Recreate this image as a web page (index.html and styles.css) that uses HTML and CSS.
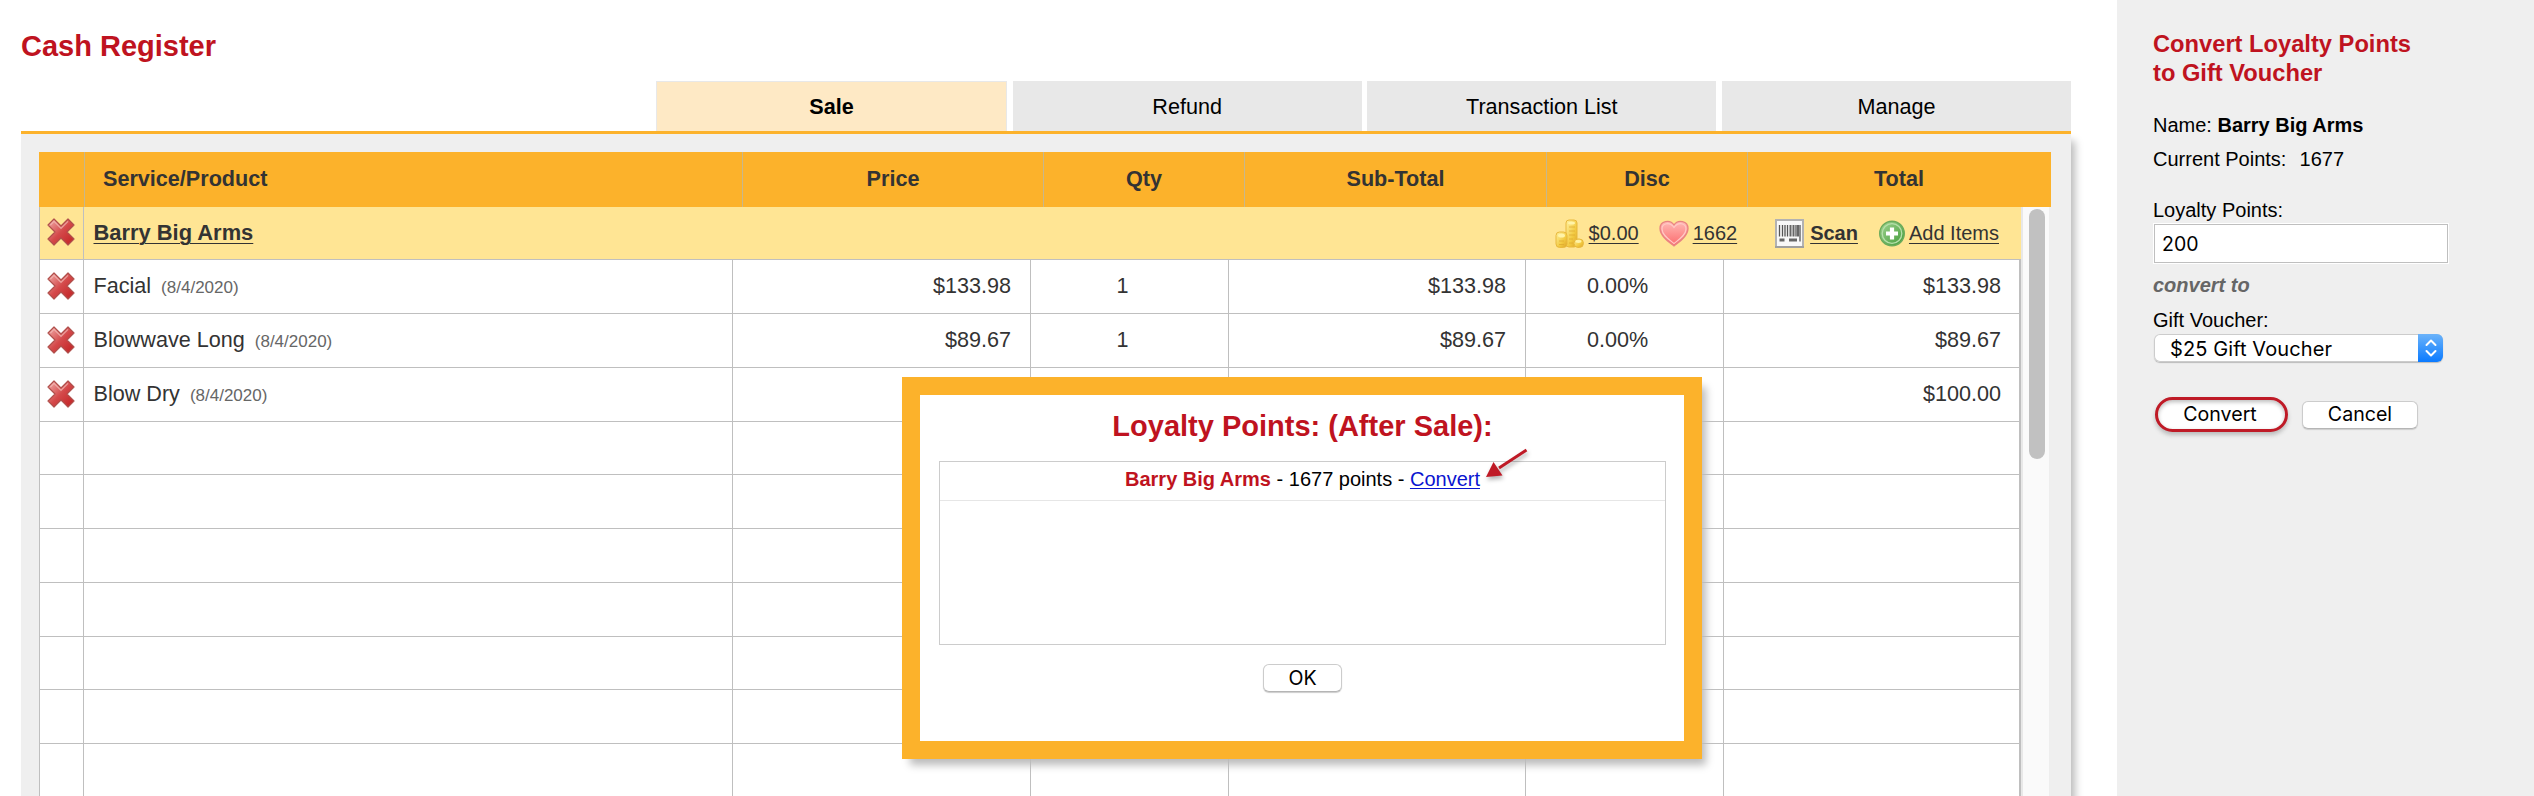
FILE: index.html
```html
<!DOCTYPE html>
<html lang="en">
<head>
  <meta charset="UTF-8" />
  <meta name="viewport" content="width=device-width, initial-scale=1" />
  <title>Cash Register</title>
  <link rel="stylesheet" href="styles.css">
</head>
<body>

<!-- Shared icons -->
<svg class="icon-defs" width="0" height="0">
  <defs>
    <linearGradient id="red" x1="0" y1="0" x2="1" y2="1">
      <stop offset="0" stop-color="#f2b0ad" />
      <stop offset="0.5" stop-color="#d4494a" />
      <stop offset="1" stop-color="#c11f22" />
    </linearGradient>
    <linearGradient id="gold" x1="0" y1="0" x2="1" y2="1">
      <stop offset="0" stop-color="#fff0a0" />
      <stop offset="0.6" stop-color="#f3cb42" />
      <stop offset="1" stop-color="#dda52a" />
    </linearGradient>
    <linearGradient id="pink" x1="0" y1="0" x2="0" y2="1">
      <stop offset="0" stop-color="#ffb9b5" />
      <stop offset="1" stop-color="#fb6a6c" />
    </linearGradient>
    <linearGradient id="green" x1="0" y1="0" x2="1" y2="1">
      <stop offset="0" stop-color="#a5d694" />
      <stop offset="1" stop-color="#3f9a37" />
    </linearGradient>
    <symbol id="delete" viewBox="0 0 28 28">
      <path d="M7 1 L14 8 L21 1 L27 7 L20 14 L27 21 L21 27 L14 20 L7 27 L1 21 L8 14 L1 7 Z" fill="url(#red)" stroke="#b0504c" stroke-width="1.2" stroke-linejoin="round" />
      <path d="M3.4 7 L7 3.4 L14 10.3 L21 3.4" fill="none" stroke="#f3bdb9" stroke-width="1.2" opacity="0.7" />
    </symbol>
  </defs>
</svg>

<div class="page">
  <main>
    <h1>Cash Register</h1>

    <nav class="tabs">
      <a class="tab active">Sale</a>
      <a class="tab">Refund</a>
      <a class="tab">Transaction List</a>
      <a class="tab">Manage</a>
    </nav>

    <div class="panel">
      <div class="header-row">
        <div></div>
        <div class="product">Service/Product</div>
        <div>Price</div>
        <div>Qty</div>
        <div>Sub-Total</div>
        <div>Disc</div>
        <div>Total</div>
      </div>

      <div class="scroll-area">
        <div class="rows">
          <div class="client-row">
            <div class="del"><svg><use href="#delete" /></svg></div>
            <a class="client">Barry Big Arms</a>
            <div class="actions">
              <svg class="coins" viewBox="0 0 29 29">
                <g fill="url(#gold)" stroke="#e8b83c" stroke-width="1">
                  <rect x="11" y="1" width="11" height="27" rx="3" />
                  <rect x="1" y="13" width="11" height="15.4" rx="3.5" />
                  <rect x="19" y="20" width="9.4" height="8.4" rx="4" />
                </g>
                <path d="M14 8h6M14 12h6M14 16h6M14 20h4M14 24h4M4 22h5M4 25.500h5" fill="none" stroke="#dda82e" stroke-width="1" opacity="0.7" />
                <g fill="#fff3a8">
                  <ellipse cx="16.500" cy="4" rx="3.500" ry="1.600" />
                  <ellipse cx="6.500" cy="16.500" rx="3.500" ry="2" />
                  <ellipse cx="23.500" cy="22.500" rx="3" ry="1.400" />
                </g>
              </svg>
              <a class="credit">$0.00</a>
              <svg class="heart" viewBox="0 0 30 27">
                <path d="M15 26 C10 22 1 16 1 8.500 C1 1 11 -1 15 5 C19 -1 29 1 29 8.500 C29 16 20 22 15 26 Z" fill="url(#pink)" stroke="#e98482" stroke-width="1.300" />
                <path d="M15 23.500 C10 19.500 3 15 3 9 C3 3 11 1.500 15 7.500 C19 1.500 27 3 27 9 C27 15 20 19.500 15 23.500 Z" fill="none" stroke="#ffc9c6" stroke-width="1.200" />
              </svg>
              <a class="points">1662</a>
              <svg class="barcode" viewBox="0 0 29 29">
                <rect x="1" y="1" width="27" height="27" fill="#f8f8f8" stroke="#b2b2b2" stroke-width="2" />
                <path d="M4.500 6v11.500M7.500 6v11.500M10 6v11.500M12.500 6v11.500M21 6v11.500M25 6v16.500" stroke="#555" stroke-width="1.300" />
                <path d="M15.500 6v11.500M18.500 6v11.500M23 6v11.500" stroke="#666" stroke-width="2" />
                <path d="M4.500 21h5M14 21h8" stroke="#666" stroke-width="3" />
                <path d="M0 28h29" stroke="#999" stroke-width="1.500" />
              </svg>
              <a class="scan">Scan</a>
              <svg class="add" viewBox="0 0 26 27">
                <circle cx="13" cy="13.500" r="12.300" fill="url(#green)" stroke="#6cab5c" stroke-width="1.400" />
                <circle cx="13" cy="13.500" r="9.800" fill="none" stroke="#b7dfab" stroke-width="1.300" />
                <path d="M13 7.500v12M7 13.500h12" stroke="#fff" stroke-width="4.200" />
              </svg>
              <a class="add-items">Add Items</a>
            </div>
          </div>

          <div class="row">
            <div class="del"><svg><use href="#delete" /></svg></div>
            <div class="name">Facial <small>(8/4/2020)</small></div>
            <div class="money">$133.98</div>
            <div class="mid">1</div>
            <div class="money">$133.98</div>
            <div class="mid">0.00%</div>
            <div class="total">$133.98</div>
          </div>
          <div class="row">
            <div class="del"><svg><use href="#delete" /></svg></div>
            <div class="name">Blowwave Long <small>(8/4/2020)</small></div>
            <div class="money">$89.67</div>
            <div class="mid">1</div>
            <div class="money">$89.67</div>
            <div class="mid">0.00%</div>
            <div class="total">$89.67</div>
          </div>
          <div class="row">
            <div class="del"><svg><use href="#delete" /></svg></div>
            <div class="name">Blow Dry <small>(8/4/2020)</small></div>
            <div></div><div></div><div></div><div></div>
            <div class="total">$100.00</div>
          </div>

          <!-- Empty rows -->
          <div class="row short"><div></div><div></div><div></div><div></div><div></div><div></div><div></div></div>
          <div class="row"><div></div><div></div><div></div><div></div><div></div><div></div><div></div></div>
          <div class="row"><div></div><div></div><div></div><div></div><div></div><div></div><div></div></div>
          <div class="row"><div></div><div></div><div></div><div></div><div></div><div></div><div></div></div>
          <div class="row short"><div></div><div></div><div></div><div></div><div></div><div></div><div></div></div>
          <div class="row"><div></div><div></div><div></div><div></div><div></div><div></div><div></div></div>
          <div class="row"><div></div><div></div><div></div><div></div><div></div><div></div><div></div></div>
        </div>
        <div class="scrollbar"><div class="thumb"></div></div>
      </div>
    </div>
  </main>

  <aside>
    <h2>Convert Loyalty Points<br>to Gift Voucher</h2>
    <p>Name: <b>Barry Big Arms</b></p>
    <p>Current Points: &nbsp;<span class="current">1677</span></p>

    <label class="points-label">Loyalty Points:</label>
    <div class="input">200</div>
    <div class="convert-to">convert to</div>
    <label>Gift Voucher:</label>
    <div class="select">
      <span>$25 Gift Voucher</span>
      <div class="arrows">
        <svg width="12" height="18" viewBox="0 0 12 18">
          <path d="M1.500 6 L6 1.500 L10.500 6 M1.500 12 L6 16.500 L10.500 12" fill="none" stroke="#fff" stroke-width="2" stroke-linecap="round" stroke-linejoin="round" />
        </svg>
      </div>
    </div>
    <div class="buttons">
      <button class="convert">Convert</button>
      <button class="cancel">Cancel</button>
    </div>
  </aside>
</div>

<!-- Loyalty popup -->
<div class="popup">
  <h1>Loyalty Points: (After Sale):</h1>
  <div class="list">
    <div class="item"><b>Barry Big Arms</b> - 1677 points - <a>Convert</a></div>
  </div>
  <button>OK</button>
  <svg class="pointer" width="50" height="38" viewBox="0 0 50 38">
    <path d="M44.500 5 L17 23" stroke="#bf1a26" stroke-width="3" />
    <path d="M4 32 L11.500 17 L20.500 30.500 Z" fill="#bf1a26" />
  </svg>
</div>

</body>
</html>
```
FILE: styles.css
```css
* {
  box-sizing: border-box;
}

html, body {
  height: 100%;
  margin: 0;
  padding: 0;
  overflow: hidden;
}

body {
  font-family: "Liberation Sans", Arial, Helvetica, sans-serif;
  font-size: 21.6px;
  color: #000;
  background: #fff;
}

.icon-defs {
  position: absolute;
}

.page {
  display: flex;
  height: 100%;
}

main {
  width: 2117px;
  padding: 26px 46px 0 21px;
}

h1 {
  margin: 0;
  font-size: 29px;
  line-height: 40px;
  color: #bf1320;
}

/* Tabs */
.tabs {
  display: flex;
  gap: 5.5px;
  margin: 15px 0 0 635px;
}
.tab {
  flex: 1 1 0;
  height: 50px;
  line-height: 51px;
  text-align: center;
  background: #e8e8e8;
}
.tab.active {
  font-weight: bold;
  line-height: 49px;
  background: #fee9c5;
  border: 1px solid #e8e8e8;
  border-bottom: none;
}

.panel {
  height: 700px;
  padding: 18px 20px 0 18px;
  background: #efefef;
  border-top: 3px solid #fcb22b;
  box-shadow: 6px 8px 8px -2px #bbb;
}

.header-row {
  display: grid;
  grid-template-columns: 46px 658px 301px 201px 302px 201px 303px;
  height: 55px;
  line-height: 53px;
  font-weight: bold;
  text-align: center;
  color: #333;
  background: #fcb22b;
}
.header-row div {
  border-right: 1px solid #c8b78b;
}
.header-row div:last-child {
  padding-right: 1px;
  border-right: none;
}
.header-row .product {
  padding-left: 18px;
  text-align: left;
}

/* Rows */
.scroll-area {
  display: flex;
  color: #333;
}
.rows {
  width: 1982px;
}
.row {
  display: grid;
  grid-template-columns: 44px 649px 298px 198px 297px 198px 297px;
  height: 54px;
  line-height: 51px;
  background: #fff;
  border-left: 1px solid #bfbfbf;
  border-bottom: 1px solid #bfbfbf;
}
.row.short {
  height: 53px;
}
.row > div {
  border-right: 1px solid #bfbfbf;
}
.row > div:last-child {
  border-right-width: 2px;
}
.name {
  padding-left: 9.5px;
}
.name small {
  margin-left: 4px;
  font-size: 17px;
  color: #666;
}
.money {
  padding-right: 19px;
  text-align: right;
}
.mid {
  padding-right: 14px;
  text-align: center;
}
.row .total {
  padding-right: 18px;
  text-align: right;
}
.del svg {
  display: block;
  width: 28px;
  height: 28px;
  margin: 12px 0 0 7px;
}

.client-row {
  display: flex;
  height: 53px;
  line-height: 51px;
  background: #ffe594;
  border-left: 1px solid #bfbfbf;
  border-bottom: 1px solid #bfbfbf;
}
.client-row .del {
  width: 44px;
  border-right: 1px solid #bfbfbf;
}
.client-row .del svg {
  margin-top: 11px;
}
.client {
  flex: 1;
  padding-left: 9.5px;
  font-size: 21.9px;
  font-weight: bold;
}
.client, .actions a {
  text-decoration: underline;
  text-decoration-thickness: 1px;
  text-underline-offset: 3px;
}
.actions {
  display: flex;
  align-items: center;
  padding-right: 22px;
  font-size: 20px;
}
.actions a {
  line-height: 50px;
}
.coins, .barcode {
  width: 29px;
  height: 29px;
}
.credit {
  margin: 0 20px 0 5px;
}
.heart {
  width: 30px;
  height: 27px;
}
.points {
  margin: 0 38px 0 4px;
}
.scan {
  margin: 0 21px 0 6px;
  font-weight: bold;
}
.add {
  width: 26px;
  height: 27px;
}
.add-items {
  margin-left: 4px;
}

.scrollbar {
  width: 29px;
  height: 600px;
  padding: 2px 0 0 6px;
  background: #fafafa;
  border-left: 2px solid #e8e8e8;
  border-right: 1px solid #eee;
}
.thumb {
  width: 16px;
  height: 250px;
  border-radius: 8px;
  background: #c1c1c1;
}

/* Sidebar */
aside {
  flex: 1;
  padding: 30px 0 0 36px;
  font-size: 20px;
  background: #efefef;
}
h2 {
  margin: 0 0 20px;
  font-size: 23.7px;
  line-height: 29px;
  color: #bf1320;
}
p {
  margin: 0;
  line-height: 34px;
}
.current {
  margin-left: 2px;
}
label {
  display: block;
  line-height: 24px;
}
.points-label {
  margin-top: 22px;
}
.input {
  width: 296px;
  height: 41px;
  margin: 1px 0 9px;
  padding-left: 8px;
  font-family: Inter, sans-serif;
  font-size: 19.5px;
  line-height: 40px;
  background: #fff;
  border: 1px solid #fff;
  box-shadow: inset 0 0 0 1px #bfbfbf;
}
.convert-to {
  margin-bottom: 11px;
  line-height: 24px;
  font-weight: bold;
  font-style: italic;
  color: #666;
}
.select {
  display: flex;
  justify-content: space-between;
  width: 289px;
  height: 28px;
  margin: 2px 0 0 1px;
  padding-left: 16px;
  font-family: Inter, sans-serif;
  letter-spacing: 0.1px;
  line-height: 31px;
  background: #fff;
  border-radius: 6px;
  box-shadow: inset 0 0 0 1px #ccc, 0 1px 1px #bbb;
}
.arrows {
  display: flex;
  align-items: center;
  justify-content: center;
  width: 25px;
  border-radius: 0 6px 6px 0;
  background: linear-gradient(#6bb3fa, #0a7aff);
}
.buttons {
  display: flex;
  align-items: center;
  gap: 14px;
  margin: 35px 0 0 2px;
}
button {
  height: 28px;
  padding: 0;
  font-family: Inter, sans-serif;
  font-size: 19.6px;
  line-height: 24px;
  color: #000;
  background: #fff;
  border: 1px solid #ccc;
  border-bottom-color: #b5b5b5;
  border-radius: 6px;
  box-shadow: 0 1px 1px #ccc;
}
.convert {
  width: 133px;
  height: 35px;
  padding: 0 3px 2px 0;
  border: 3px solid #bf1a26;
  border-radius: 18px;
  box-shadow: 0 3px 4px #bbb, inset 0 2px 4px #bbb;
}
.cancel {
  width: 116px;
  padding-bottom: 2px;
}

/* Popup */
.popup {
  position: absolute;
  left: 902px;
  top: 377px;
  width: 800px;
  height: 382px;
  padding: 11px 18px 0 19px;
  text-align: center;
  background: #fff;
  border: 18px solid #fcb22b;
  box-shadow: 6px 8px 8px -2px #bbb;
}
.list {
  height: 184px;
  margin: 15px 0 19px;
  border: 1px solid #ccc;
}
.item {
  height: 39px;
  font-size: 20px;
  line-height: 35px;
  border-bottom: 1px solid #e6e6e6;
}
.item b {
  color: #bf1320;
}
.item a {
  color: #0a14d0;
  text-decoration: underline;
  text-decoration-thickness: 1px;
  text-underline-offset: 2px;
}
.popup button {
  width: 79px;
}
.pointer {
  position: absolute;
  left: 562px;
  top: 50px;
  filter: drop-shadow(1px 3px 2px rgba(0, 0, 0, 0.3));
}
```
